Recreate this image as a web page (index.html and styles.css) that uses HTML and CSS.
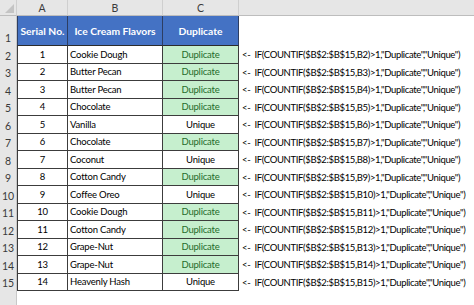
FILE: index.html
```html
<!DOCTYPE html>
<html>
<head>
<meta charset="utf-8">
<link rel="stylesheet" href="styles.css">
</head>
<body>
<div class="sheet">
  <div class="corner"><span class="tri"></span></div>
  <div class="colh">A</div>
  <div class="colh">B</div>
  <div class="colh">C</div>
  <div class="colh rest"></div>

  <div class="rowh top">1</div>
  <div class="hd first">Serial No.</div>
  <div class="hd">Ice Cream Flavors</div>
  <div class="hd">Duplicate</div>
  <div class="note"></div>

  <div class="rowh">2</div><div class="c num first">1</div><div class="c txt">Cookie Dough</div><div class="c res dup">Duplicate</div><div class="note">&lt;-&nbsp; IF(COUNTIF($B$2:$B$15,B2)&gt;1,"Duplicate","Unique")</div>
  <div class="rowh">3</div><div class="c num first">2</div><div class="c txt">Butter Pecan</div><div class="c res dup">Duplicate</div><div class="note">&lt;-&nbsp; IF(COUNTIF($B$2:$B$15,B3)&gt;1,"Duplicate","Unique")</div>
  <div class="rowh">4</div><div class="c num first">3</div><div class="c txt">Butter Pecan</div><div class="c res dup">Duplicate</div><div class="note">&lt;-&nbsp; IF(COUNTIF($B$2:$B$15,B4)&gt;1,"Duplicate","Unique")</div>
  <div class="rowh">5</div><div class="c num first">4</div><div class="c txt">Chocolate</div><div class="c res dup">Duplicate</div><div class="note">&lt;-&nbsp; IF(COUNTIF($B$2:$B$15,B5)&gt;1,"Duplicate","Unique")</div>
  <div class="rowh">6</div><div class="c num first">5</div><div class="c txt">Vanilla</div><div class="c res">Unique</div><div class="note">&lt;-&nbsp; IF(COUNTIF($B$2:$B$15,B6)&gt;1,"Duplicate","Unique")</div>
  <div class="rowh">7</div><div class="c num first">6</div><div class="c txt">Chocolate</div><div class="c res dup">Duplicate</div><div class="note">&lt;-&nbsp; IF(COUNTIF($B$2:$B$15,B7)&gt;1,"Duplicate","Unique")</div>
  <div class="rowh">8</div><div class="c num first">7</div><div class="c txt">Coconut</div><div class="c res">Unique</div><div class="note">&lt;-&nbsp; IF(COUNTIF($B$2:$B$15,B8)&gt;1,"Duplicate","Unique")</div>
  <div class="rowh">9</div><div class="c num first">8</div><div class="c txt">Cotton Candy</div><div class="c res dup">Duplicate</div><div class="note">&lt;-&nbsp; IF(COUNTIF($B$2:$B$15,B9)&gt;1,"Duplicate","Unique")</div>
  <div class="rowh">10</div><div class="c num first">9</div><div class="c txt">Coffee Oreo</div><div class="c res">Unique</div><div class="note">&lt;-&nbsp; IF(COUNTIF($B$2:$B$15,B10)&gt;1,"Duplicate","Unique")</div>
  <div class="rowh">11</div><div class="c num first">10</div><div class="c txt">Cookie Dough</div><div class="c res dup">Duplicate</div><div class="note">&lt;-&nbsp; IF(COUNTIF($B$2:$B$15,B11)&gt;1,"Duplicate","Unique")</div>
  <div class="rowh">12</div><div class="c num first">11</div><div class="c txt">Cotton Candy</div><div class="c res dup">Duplicate</div><div class="note">&lt;-&nbsp; IF(COUNTIF($B$2:$B$15,B12)&gt;1,"Duplicate","Unique")</div>
  <div class="rowh">13</div><div class="c num first">12</div><div class="c txt">Grape-Nut</div><div class="c res dup">Duplicate</div><div class="note">&lt;-&nbsp; IF(COUNTIF($B$2:$B$15,B13)&gt;1,"Duplicate","Unique")</div>
  <div class="rowh">14</div><div class="c num first">13</div><div class="c txt">Grape-Nut</div><div class="c res dup">Duplicate</div><div class="note">&lt;-&nbsp; IF(COUNTIF($B$2:$B$15,B14)&gt;1,"Duplicate","Unique")</div>
  <div class="rowh">15</div><div class="c num first">14</div><div class="c txt">Heavenly Hash</div><div class="c res">Unique</div><div class="note">&lt;-&nbsp; IF(COUNTIF($B$2:$B$15,B15)&gt;1,"Duplicate","Unique")</div>

  <div class="rowh"></div><div class="blank"></div><div class="blank"></div><div class="blank"></div><div class="blank"></div>
</div>
</body>
</html>
```
FILE: styles.css
```css
html, body {
  margin: 0;
  padding: 0;
  background: #ffffff;
}
.sheet {
  width: 474px;
  height: 305px;
  display: grid;
  grid-template-columns: 17px 51px 95px 76px 1fr;
  grid-template-rows: 16px 30px repeat(14, 17.5px) 1fr;
  font-family: Lato, "Open Sans", sans-serif;
  font-size: 9.5px;
  letter-spacing: -0.2px;
  color: #000;
  overflow: hidden;
}
.sheet > div {
  box-sizing: border-box;
  display: flex;
  align-items: center;
  white-space: nowrap;
  min-width: 0;
}
.corner {
  background: #e6e6e6;
  border-right: 1px solid #cfcfcf;
  border-bottom: 1px solid #bdbdbd;
  position: relative;
}
.tri {
  position: absolute;
  right: 2px;
  bottom: 2px;
  width: 0;
  height: 0;
  border-left: 9px solid transparent;
  border-bottom: 9px solid #c4c4c4;
}
.colh {
  background: #e6e6e6;
  border-right: 1px solid #cfcfcf;
  border-bottom: 1px solid #bdbdbd;
  justify-content: center;
  color: #3a3a3a;
  font-size: 10.5px;
  letter-spacing: 0;
}
.colh.rest {
  border-right: none;
}
.rowh {
  background: #e6e6e6;
  border-right: 1px solid #c8c8c8;
  justify-content: center;
  color: #3a3a3a;
  font-size: 10.5px;
  letter-spacing: 0;
  padding-top: 2px;
}
.rowh.top {
  align-items: flex-end;
  padding-bottom: 2px;
}
.hd {
  background: #4472c4;
  color: #ffffff;
  font-weight: 700;
  font-size: 10.3px;
  letter-spacing: 0;
  justify-content: center;
  border-right: 1px solid #2d3e63;
  border-bottom: 1px solid #2b2b2b;
}
.hd.first {
  border-left: 1px solid #2d3e63;
}
.c {
  border-right: 1px solid #3c3c3c;
  border-bottom: 1px solid #3c3c3c;
}
.c.first {
  border-left: 1px solid #3c3c3c;
}
.num {
  justify-content: center;
}
.txt {
  padding-left: 2px;
}
.res {
  justify-content: center;
}
.dup {
  background: #c6efce;
  color: #1f6b2a;
}
.note {
  padding-left: 3px;
  font-size: 9.5px;
  letter-spacing: -0.35px;
  color: #000;
}
.blank {
  background: #ffffff;
}
```
